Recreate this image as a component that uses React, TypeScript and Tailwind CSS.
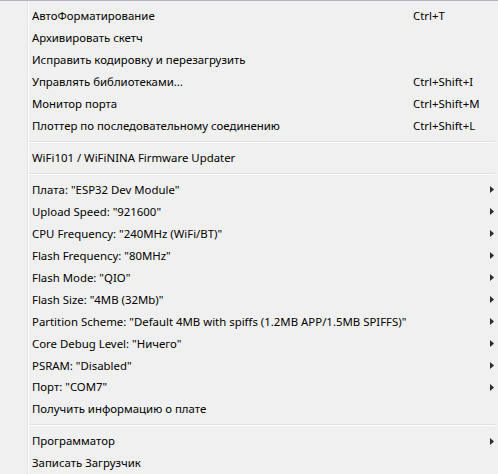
import React from "react";

type Item = { label: string; shortcut?: string; sub?: boolean } | "sep";

const items: Item[] = [
  { label: "АвтоФорматирование", shortcut: "Ctrl+T" },
  { label: "Архивировать скетч" },
  { label: "Исправить кодировку и перезагрузить" },
  { label: "Управлять библиотеками...", shortcut: "Ctrl+Shift+I" },
  { label: "Монитор порта", shortcut: "Ctrl+Shift+M" },
  { label: "Плоттер по последовательному соединению", shortcut: "Ctrl+Shift+L" },
  "sep",
  { label: "WiFi101 / WiFiNINA Firmware Updater" },
  "sep",
  { label: 'Плата: "ESP32 Dev Module"', sub: true },
  { label: 'Upload Speed: "921600"', sub: true },
  { label: 'CPU Frequency: "240MHz (WiFi/BT)"', sub: true },
  { label: 'Flash Frequency: "80MHz"', sub: true },
  { label: 'Flash Mode: "QIO"', sub: true },
  { label: 'Flash Size: "4MB (32Mb)"', sub: true },
  { label: 'Partition Scheme: "Default 4MB with spiffs (1.2MB APP/1.5MB SPIFFS)"', sub: true },
  { label: 'Core Debug Level: "Ничего"', sub: true },
  { label: 'PSRAM: "Disabled"', sub: true },
  { label: 'Порт: "COM7"', sub: true },
  { label: "Получить информацию о плате" },
  "sep",
  { label: "Программатор", sub: true },
  { label: "Записать Загрузчик" },
];

function Arrow() {
  return (
    <svg width="4" height="7" viewBox="0 0 4 7" className="block">
      <path d="M0 0 L4 3.5 L0 7 Z" fill="#2b2b2b" />
    </svg>
  );
}

export default function App() {
  return (
    <div
      className="w-[498px] h-[474px] overflow-hidden bg-[#f0f0f0] border-t border-[#b4b4be] flex text-black text-[11.4px]"
      style={{ fontFamily: '"Noto Sans", "Liberation Sans", sans-serif' }}
    >
      <div className="w-[27px] shrink-0" />
      <div className="w-px shrink-0 bg-[#e2e3e3]" />
      <div className="w-px shrink-0 bg-white" />
      <div className="flex-1 flex flex-col pt-[4px] pr-[3px]">
        {items.map((it, i) =>
          it === "sep" ? (
            <div key={i} className="h-[10px] flex flex-col pt-[4px]">
              <div className="h-px bg-[#e0e0e0]" />
              <div className="h-px bg-white" />
            </div>
          ) : (
            <div key={i} className="h-[22px] flex items-center pl-[3px] pr-[1px] leading-none">
              <span className="w-[381px] shrink-0 whitespace-nowrap">{it.label}</span>
              {it.shortcut && <span className="whitespace-nowrap">{it.shortcut}</span>}
              {it.sub && (
                <span className="ml-auto">
                  <Arrow />
                </span>
              )}
            </div>
          )
        )}
      </div>
    </div>
  );
}
